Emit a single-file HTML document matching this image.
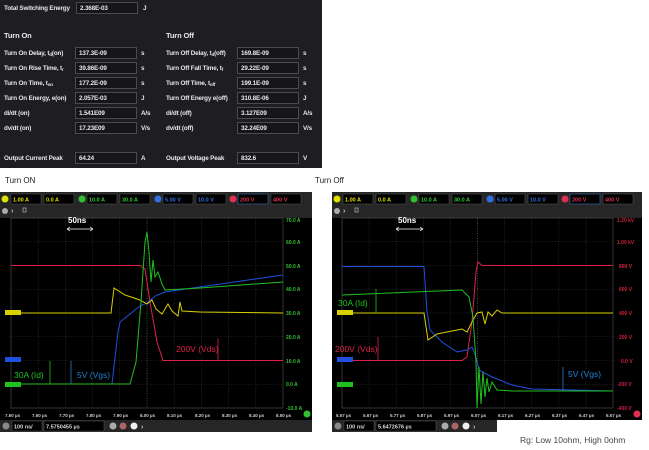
<!DOCTYPE html>
<html><head><meta charset="utf-8"><style>
body{margin:0;width:649px;height:450px;background:#fff;position:relative;overflow:hidden;font-family:"Liberation Sans",sans-serif}
#tbl{position:absolute;left:0;top:0;width:322px;height:168px;background:#1d1d22;color:#e8e8e8;font-size:6.3px;font-weight:bold;letter-spacing:-0.15px}
#tbl div{position:absolute;white-space:nowrap}
#tbl sub{font-size:4.5px;vertical-align:-1px;line-height:0}
.b{height:12px;background:#16161a;border:1px solid #4a4a50;line-height:11px;padding-left:3px;box-sizing:border-box;width:62px}
.l{left:4px}
.lab{position:absolute;font-size:8px;color:#222}
svg{position:absolute}
</style></head><body>
<div id="tbl">
<div class="l" style="top:5px">Total Switching Energy</div><div class="b" style="left:76px;top:2px">2.368E-03</div><div style="left:143px;top:5px">J</div>
<div class="l" style="top:31px;font-size:7.5px">Turn On</div><div style="left:166px;top:31px;font-size:7.5px">Turn Off</div>

<div class="l" style="top:50px">Turn On Delay, t<sub>d</sub>(on)</div><div class="b" style="left:75px;top:47px">137.3E-09</div><div style="left:141px;top:50px">s</div>
<div style="left:166px;top:50px">Turn Off Delay, t<sub>d</sub>(off)</div><div class="b" style="left:237px;top:47px">169.8E-09</div><div style="left:303px;top:50px">s</div>

<div class="l" style="top:65px">Turn On Rise Time, t<sub>r</sub></div><div class="b" style="left:75px;top:62px">39.86E-09</div><div style="left:141px;top:65px">s</div>
<div style="left:166px;top:65px">Turn Off Fall Time, t<sub>f</sub></div><div class="b" style="left:237px;top:62px">29.22E-09</div><div style="left:303px;top:65px">s</div>

<div class="l" style="top:80px">Turn On Time, t<sub>on</sub></div><div class="b" style="left:75px;top:77px">177.2E-09</div><div style="left:141px;top:80px">s</div>
<div style="left:166px;top:80px">Turn Off Time, t<sub>off</sub></div><div class="b" style="left:237px;top:77px">199.1E-09</div><div style="left:303px;top:80px">s</div>

<div class="l" style="top:95px">Turn On Energy, e(on)</div><div class="b" style="left:75px;top:92px">2.057E-03</div><div style="left:141px;top:95px">J</div>
<div style="left:166px;top:95px">Turn Off Energy e(off)</div><div class="b" style="left:237px;top:92px">310.8E-06</div><div style="left:303px;top:95px">J</div>

<div class="l" style="top:110px">di/dt (on)</div><div class="b" style="left:75px;top:107px">1.541E09</div><div style="left:141px;top:110px">A/s</div>
<div style="left:166px;top:110px">di/dt (off)</div><div class="b" style="left:237px;top:107px">3.127E09</div><div style="left:303px;top:110px">A/s</div>

<div class="l" style="top:125px">dv/dt (on)</div><div class="b" style="left:75px;top:122px">17.23E09</div><div style="left:141px;top:125px">V/s</div>
<div style="left:166px;top:125px">dv/dt (off)</div><div class="b" style="left:237px;top:122px">32.24E09</div><div style="left:303px;top:125px">V/s</div>

<div class="l" style="top:155px">Output Current Peak</div><div class="b" style="left:75px;top:152px">64.24</div><div style="left:141px;top:155px">A</div>
<div style="left:166px;top:155px">Output Voltage Peak</div><div class="b" style="left:237px;top:152px">832.6</div><div style="left:303px;top:155px">V</div>
</div>

<div class="lab" style="left:5px;top:176px">Turn ON</div>
<div class="lab" style="left:315px;top:176px">Turn Off</div>
<div class="lab" style="left:520px;top:435px;font-size:8.5px;color:#444">Rg: Low 10ohm, High 0ohm</div>

<!-- LEFT SCOPE -->
<svg style="left:0;top:192px" width="312" height="240" viewBox="0 0 312 240" font-family="Liberation Sans" font-weight="bold">
<rect width="312" height="240" fill="#000"/>
<rect width="312" height="26" fill="#262626"/>
<g font-size="5.5">
<circle cx="5" cy="7" r="3.5" fill="#e0e000"/><rect x="11" y="2" width="30" height="10" fill="#000" stroke="#555" stroke-width=".5"/><text x="13" y="9.5" fill="#e0e000">1.00 A</text>
<rect x="44" y="2" width="30" height="10" fill="#000" stroke="#555" stroke-width=".5"/><text x="46" y="9.5" fill="#e0e000">0.0 A</text>
<circle cx="82" cy="7" r="3.5" fill="#30c030"/><rect x="87" y="2" width="30" height="10" fill="#000" stroke="#555" stroke-width=".5"/><text x="89" y="9.5" fill="#30d030">10.0 A</text>
<rect x="120" y="2" width="30" height="10" fill="#000" stroke="#555" stroke-width=".5"/><text x="122" y="9.5" fill="#30d030">30.0 A</text>
<circle cx="158" cy="7" r="3.5" fill="#3070e0"/><rect x="163" y="2" width="30" height="10" fill="#000" stroke="#555" stroke-width=".5"/><text x="165" y="9.5" fill="#3070e0">5.00 V</text>
<rect x="196" y="2" width="30" height="10" fill="#000" stroke="#555" stroke-width=".5"/><text x="198" y="9.5" fill="#3070e0">10.0 V</text>
<circle cx="233" cy="7" r="3.5" fill="#e03050"/><rect x="238" y="2" width="30" height="10" fill="#000" stroke="#3060a0" stroke-width=".7"/><text x="240" y="9.5" fill="#e03050">200 V</text>
<rect x="271" y="2" width="30" height="10" fill="#000" stroke="#555" stroke-width=".5"/><text x="273" y="9.5" fill="#e03050">400 V</text>
<circle cx="5" cy="19" r="3" fill="#aaa"/><text x="11" y="21" fill="#ccc" font-size="7">›</text><rect x="23" y="16" width="3" height="4" fill="none" stroke="#ccc" stroke-width=".6"/>
</g>
<g stroke="#3a3a3a" stroke-width=".6" stroke-dasharray="1,1.5">
<path d="M38.2 26V216M65.4 26V216M92.6 26V216M119.8 26V216M174.2 26V216M201.4 26V216M228.6 26V216M255.8 26V216M11 49.75H283M11 73.5H283M11 97.25H283M11 121H283M11 144.75H283M11 168.5H283M11 192.25H283"/>
</g>
<path d="M147 26V216" stroke="#777" stroke-width=".6" stroke-dasharray="1,1.5"/>
<rect x="11" y="26" width="272" height="190" fill="none" stroke="#555" stroke-width=".6"/>
<path d="M11 73.5H140L145 77L150 110L157 150L163 168.5H283" stroke="#e0204a" stroke-width="1" fill="none"/>
<path d="M11 192H112L118 140L120 130L130 122L140 114L147 111L155 104L165 100L200 95L283 83" stroke="#2050e0" stroke-width="1" fill="none"/>
<path d="M11 121H111L114 96L125 103L140 108L147 112L152 108L156 117L162 122L168 112L172 119L178 124L180 110L182 119L200 120L283 121" stroke="#d8d000" stroke-width="1" fill="none"/>
<path d="M11 192H130L136 170L141 110L145 50L147 40L149 60L151 90L153 68L155 85L158 80L162 92L165 98L200 96L283 90" stroke="#20c020" stroke-width="1" fill="none"/>
<g font-size="5" fill="#30c030">
<text x="286" y="30">70.0 A</text><text x="286" y="52">60.0 A</text><text x="286" y="76">50.0 A</text><text x="286" y="99">40.0 A</text><text x="286" y="123">30.0 A</text><text x="286" y="147">20.0 A</text><text x="286" y="171">10.0 A</text><text x="286" y="194">0.0 A</text><text x="286" y="218">-10.0 A</text>
</g>
<g font-size="4.5" fill="#ccc">
<text x="5" y="225">7.50 µs</text><text x="32" y="225">7.60 µs</text><text x="59" y="225">7.70 µs</text><text x="86" y="225">7.80 µs</text><text x="113" y="225">7.90 µs</text><text x="140" y="225">8.00 µs</text><text x="167" y="225">8.10 µs</text><text x="195" y="225">8.20 µs</text><text x="222" y="225">8.30 µs</text><text x="249" y="225">8.40 µs</text><text x="276" y="225">8.50 µs</text>
</g>
<circle cx="307" cy="222" r="3.5" fill="#30c030"/>
<rect y="228" width="312" height="12" fill="#262626"/>
<circle cx="6" cy="234" r="3.5" fill="#888"/>
<rect x="12" y="229" width="30" height="10" fill="#000" stroke="#555" stroke-width=".5"/><text x="14" y="236.5" font-size="5.5" fill="#ddd">100 ns/</text>
<rect x="44" y="229" width="60" height="10" fill="#000" stroke="#555" stroke-width=".5"/><text x="46" y="236.5" font-size="5.5" fill="#ddd">7.5750455 µs</text>
<circle cx="113" cy="234" r="3.5" fill="#aaa"/><circle cx="123" cy="234" r="3.5" fill="#a66"/><circle cx="134" cy="234" r="3.5" fill="#eee"/>
<text x="141" y="237" fill="#ccc" font-size="7">›</text>
<text x="68" y="31" font-size="8" fill="#fff">50ns</text>
<path d="M67 37H93M67 37l3-2M67 37l3 2M93 37l-3-2M93 37l-3 2" stroke="#fff" stroke-width=".7"/>
<rect x="5" y="118" width="16" height="5" fill="#d8d000"/><rect x="5" y="165" width="16" height="5" fill="#2050e0"/><rect x="5" y="190" width="16" height="5" fill="#20c020"/>
<path d="M50 169V192" stroke="#20c020" stroke-width=".8"/><text x="14" y="186" font-size="8.5" fill="#20c020" font-weight="normal">30A (Id)</text>
<path d="M71 169V192" stroke="#2080d0" stroke-width=".8"/><text x="77" y="186" font-size="8.5" fill="#2080d0" font-weight="normal">5V (Vgs)</text>
<path d="M218 146V168" stroke="#e0204a" stroke-width=".8"/><text x="176" y="160" font-size="8.5" fill="#e0204a" font-weight="normal">200V (Vds)</text>
</svg>

<!-- RIGHT SCOPE -->
<svg style="left:332px;top:192px" width="310" height="240" viewBox="0 0 310 240" font-family="Liberation Sans" font-weight="bold">
<rect width="310" height="240" fill="#000"/>
<rect width="310" height="26" fill="#262626"/>
<g font-size="5.5">
<circle cx="5" cy="7" r="3.5" fill="#e0e000"/><rect x="11" y="2" width="30" height="10" fill="#000" stroke="#555" stroke-width=".5"/><text x="13" y="9.5" fill="#e0e000">1.00 A</text>
<rect x="44" y="2" width="30" height="10" fill="#000" stroke="#555" stroke-width=".5"/><text x="46" y="9.5" fill="#e0e000">0.0 A</text>
<circle cx="82" cy="7" r="3.5" fill="#30c030"/><rect x="87" y="2" width="30" height="10" fill="#000" stroke="#555" stroke-width=".5"/><text x="89" y="9.5" fill="#30d030">10.0 A</text>
<rect x="120" y="2" width="30" height="10" fill="#000" stroke="#555" stroke-width=".5"/><text x="122" y="9.5" fill="#30d030">30.0 A</text>
<circle cx="158" cy="7" r="3.5" fill="#3070e0"/><rect x="163" y="2" width="30" height="10" fill="#000" stroke="#555" stroke-width=".5"/><text x="165" y="9.5" fill="#3070e0">5.00 V</text>
<rect x="196" y="2" width="30" height="10" fill="#000" stroke="#555" stroke-width=".5"/><text x="198" y="9.5" fill="#3070e0">10.0 V</text>
<circle cx="233" cy="7" r="3.5" fill="#e03050"/><rect x="238" y="2" width="30" height="10" fill="#000" stroke="#3060a0" stroke-width=".7"/><text x="240" y="9.5" fill="#e03050">200 V</text>
<rect x="271" y="2" width="30" height="10" fill="#000" stroke="#555" stroke-width=".5"/><text x="273" y="9.5" fill="#e03050">400 V</text>
<circle cx="5" cy="19" r="3" fill="#aaa"/><text x="11" y="21" fill="#ccc" font-size="7">›</text><rect x="23" y="16" width="3" height="4" fill="none" stroke="#ccc" stroke-width=".6"/>
</g>
<g stroke="#3a3a3a" stroke-width=".6" stroke-dasharray="1,1.5">
<path d="M37.1 26V216M64.2 26V216M91.3 26V216M118.4 26V216M172.6 26V216M199.7 26V216M226.8 26V216M253.9 26V216M10 49.75H281M10 73.5H281M10 97.25H281M10 121H281M10 144.75H281M10 168.5H281M10 192.25H281"/>
</g>
<path d="M145.5 26V216" stroke="#777" stroke-width=".6" stroke-dasharray="1,1.5"/>
<rect x="10" y="26" width="271" height="190" fill="none" stroke="#555" stroke-width=".6"/>
<path d="M10 168.5H130L135 165L140 130L144 80L146 70L150 73.5H281" stroke="#e0204a" stroke-width="1" fill="none"/>
<path d="M10 74.5H92L95 120L98 138L110 150L125 160L135 158L140 155L144 165L147 178L160 185L180 193L200 197L281 199" stroke="#2050e0" stroke-width="1" fill="none"/>
<path d="M10 121H92L96 148L105 142L130 137L135 140L140 130L145 121L150 120L153 132L156 120L160 124L165 118L170 121L281 121" stroke="#d8d000" stroke-width="1" fill="none"/>
<path d="M10 103L130 98L137 105L141 125L144 170L145 216L147 175L149 212L151 180L153 205L155 186L157 200L160 190L165 198L180 199H281" stroke="#20c020" stroke-width="1" fill="none"/>
<g font-size="5" fill="#d02040">
<text x="285" y="30">1.20 kV</text><text x="285" y="52">1.00 kV</text><text x="287" y="76">800 V</text><text x="287" y="99">600 V</text><text x="287" y="123">400 V</text><text x="287" y="147">200 V</text><text x="289" y="171">0.0 V</text><text x="285" y="194">-200 V</text><text x="285" y="218">-400 V</text>
</g>
<g font-size="4.5" fill="#ccc">
<text x="4" y="225">5.57 µs</text><text x="31" y="225">5.67 µs</text><text x="58" y="225">5.77 µs</text><text x="85" y="225">5.87 µs</text><text x="112" y="225">5.97 µs</text><text x="139" y="225">6.07 µs</text><text x="166" y="225">6.17 µs</text><text x="193" y="225">6.27 µs</text><text x="220" y="225">6.37 µs</text><text x="247" y="225">6.47 µs</text><text x="274" y="225">6.57 µs</text>
</g>
<circle cx="305" cy="222" r="3.5" fill="#e03050"/>
<rect y="228" width="165" height="12" fill="#262626"/>
<circle cx="6" cy="234" r="3.5" fill="#888"/>
<rect x="12" y="229" width="30" height="10" fill="#000" stroke="#555" stroke-width=".5"/><text x="14" y="236.5" font-size="5.5" fill="#ddd">100 ns/</text>
<rect x="44" y="229" width="60" height="10" fill="#000" stroke="#555" stroke-width=".5"/><text x="46" y="236.5" font-size="5.5" fill="#ddd">5.6472676 µs</text>
<circle cx="113" cy="234" r="3.5" fill="#aaa"/><circle cx="123" cy="234" r="3.5" fill="#a66"/><circle cx="134" cy="234" r="3.5" fill="#eee"/>
<text x="141" y="237" fill="#ccc" font-size="7">›</text>
<rect x="165" y="228" width="145" height="12" fill="#fff"/>
<text x="66" y="31" font-size="8" fill="#fff">50ns</text>
<path d="M64 37H91M64 37l3-2M64 37l3 2M91 37l-3-2M91 37l-3 2" stroke="#fff" stroke-width=".7"/>
<rect x="5" y="118" width="16" height="5" fill="#d8d000"/><rect x="5" y="165" width="16" height="5" fill="#2050e0"/><rect x="5" y="190" width="16" height="5" fill="#20c020"/>
<path d="M44 97V121" stroke="#20c020" stroke-width=".8"/><text x="6" y="114" font-size="8.5" fill="#20c020" font-weight="normal">30A (Id)</text>
<path d="M46 145V169" stroke="#e0204a" stroke-width=".8"/><text x="3" y="160" font-size="8.5" fill="#e0204a" font-weight="normal">200V (Vds)</text>
<path d="M231 175V199" stroke="#2080d0" stroke-width=".8"/><text x="236" y="185" font-size="8.5" fill="#2080d0" font-weight="normal">5V (Vgs)</text>
</svg>
</body></html>
